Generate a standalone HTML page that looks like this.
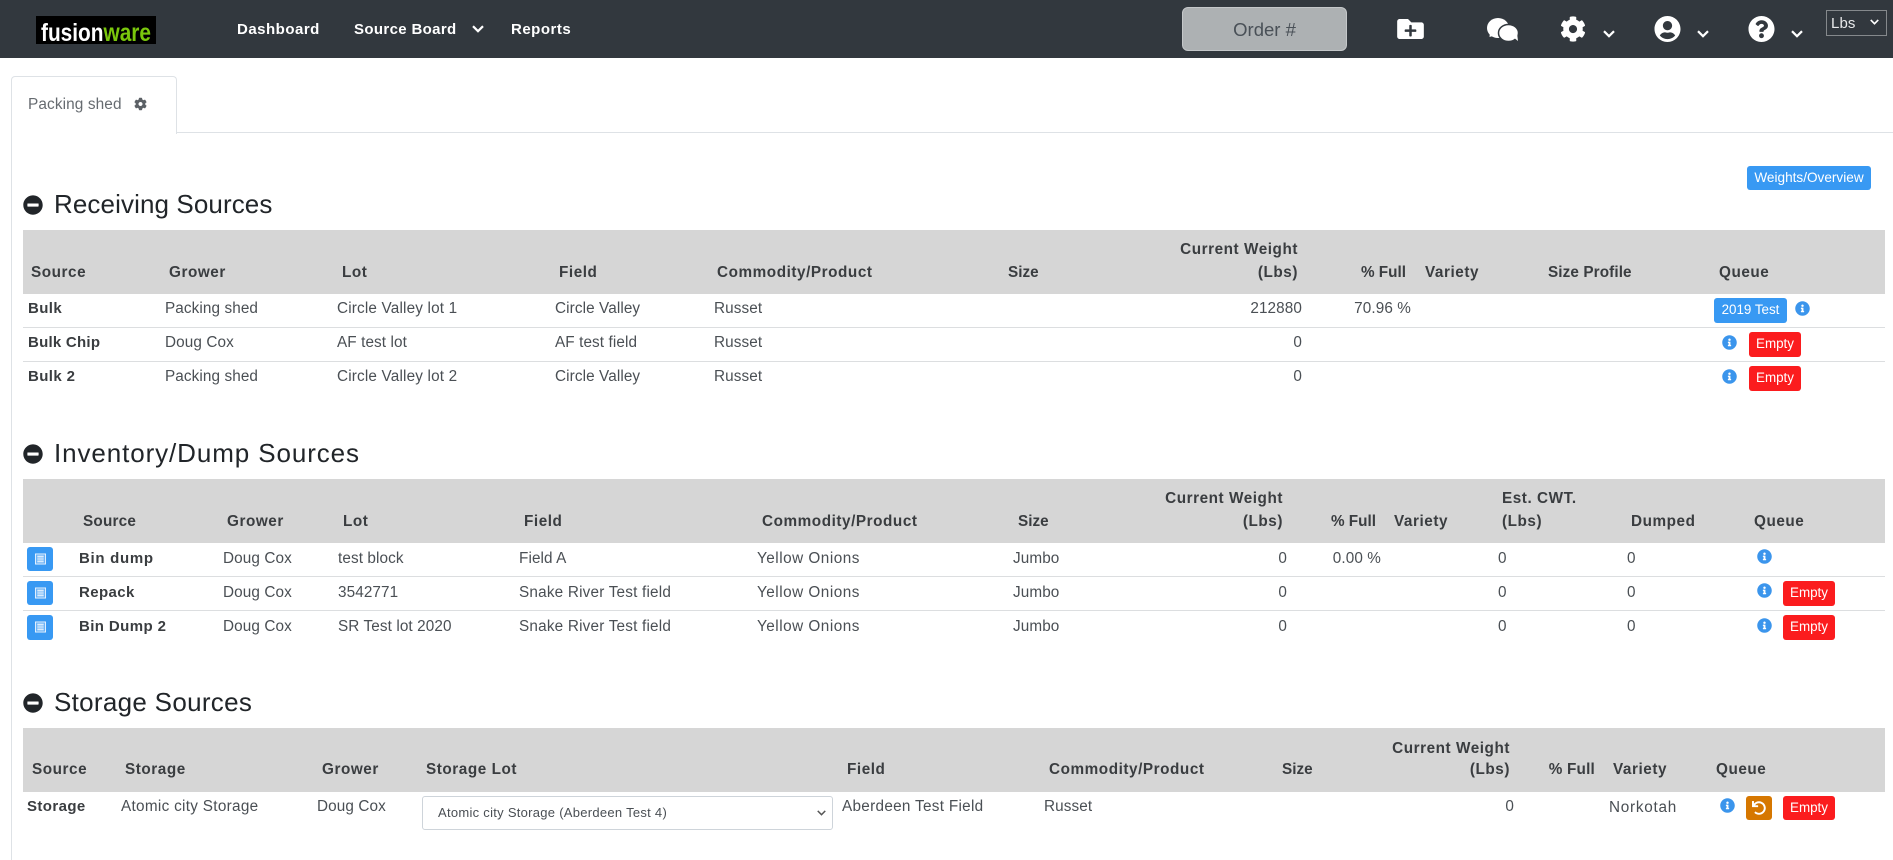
<!DOCTYPE html>
<html><head><meta charset="utf-8"><title>Source Board</title>
<style>
html,body{margin:0;padding:0;background:#fff}
body{position:relative;width:1893px;height:860px;overflow:hidden;font-family:"Liberation Sans",sans-serif;color:#495057}
.t,.h,.b,.n,.x{position:absolute;white-space:nowrap;line-height:20px}
.t,.h,.b{margin-top:1px}
.t{font-size:15.3px;letter-spacing:.1px;color:#4a4f54}
.h{font-size:15.3px;font-weight:700;letter-spacing:.55px;color:#3a3d40}
.b{font-size:15px;font-weight:700;letter-spacing:.4px;color:#3a3d40}
.n{font-size:15px;font-weight:700;letter-spacing:.5px;color:#fff;top:20px}
.x{font-size:26px;line-height:36px;color:#212529}
.bar{position:absolute;left:23px;width:1862px;background:#d6d6d6}
.ln{position:absolute;left:23px;width:1862px;height:1px;background:#dcdee0}
.btn{position:absolute;border-radius:3px;color:#fff;font-size:13.4px;text-align:center;line-height:24px;height:25px}
.e{background:#fb1c1e;width:52px}
.bl{background:#3899f3}
svg{position:absolute;display:block}
.i{width:15px;height:15px;fill:#3b95ec}
.c{width:20px;height:20px;left:23px;fill:#212529}
</style></head><body>

<svg width="0" height="0" style="position:absolute"><defs>
<symbol id="info" viewBox="0 0 512 512"><path d="M256 8C119.043 8 8 119.083 8 256c0 136.997 111.043 248 248 248s248-111.003 248-248C504 119.083 392.957 8 256 8zm0 110c23.196 0 42 18.804 42 42s-18.804 42-42 42-42-18.804-42-42 18.804-42 42-42zm56 254c0 6.627-5.373 12-12 12h-88c-6.627 0-12-5.373-12-12v-24c0-6.627 5.373-12 12-12h12v-64h-12c-6.627 0-12-5.373-12-12v-24c0-6.627 5.373-12 12-12h64c6.627 0 12 5.373 12 12v100h12c6.627 0 12 5.373 12 12v24z"/></symbol>
<symbol id="minus" viewBox="0 0 512 512"><path d="M256 8C119 8 8 119 8 256s111 248 248 248 248-111 248-248S393 8 256 8zM124 296c-6.600 0-12-5.400-12-12v-56c0-6.600 5.400-12 12-12h264c6.600 0 12 5.400 12 12v56c0 6.600-5.400 12-12 12H124z"/></symbol>
<symbol id="cog" viewBox="0 0 512 512"><path d="M487.400 315.700l-42.600-24.600c4.300-23.200 4.300-47 0-70.200l42.600-24.600c4.900-2.800 7.100-8.600 5.500-14-11.100-35.600-30-67.800-54.700-94.600-3.800-4.100-10-5.100-14.800-2.300L380.800 110c-17.900-15.400-38.500-27.300-60.800-35.100V25.800c0-5.600-3.900-10.500-9.400-11.700-36.700-8.200-74.300-7.800-109.200 0-5.500 1.200-9.400 6.100-9.400 11.700V75c-22.200 7.900-42.800 19.800-60.800 35.100L88.700 85.500c-4.900-2.800-11-1.900-14.800 2.300-24.700 26.700-43.600 58.900-54.700 94.600-1.700 5.400.6 11.200 5.500 14L67.300 221c-4.300 23.200-4.300 47 0 70.200l-42.600 24.600c-4.900 2.800-7.100 8.600-5.500 14 11.100 35.600 30 67.800 54.700 94.600 3.800 4.100 10 5.100 14.800 2.300l42.600-24.600c17.900 15.400 38.500 27.300 60.800 35.100v49.200c0 5.600 3.900 10.500 9.400 11.700 36.700 8.200 74.300 7.800 109.200 0 5.500-1.200 9.400-6.100 9.400-11.700v-49.200c22.200-7.900 42.800-19.800 60.800-35.100l42.600 24.600c4.900 2.800 11 1.900 14.800-2.300 24.700-26.700 43.600-58.900 54.700-94.600 1.500-5.500-.7-11.300-5.600-14.100zM256 336c-44.100 0-80-35.900-80-80s35.900-80 80-80 80 35.900 80 80-35.900 80-80 80z"/></symbol>
<symbol id="doc" viewBox="0 0 12 12"><rect x=".5" y=".5" width="11" height="11" fill="#cfe6fc" fill-opacity=".35" stroke="#eaf4fe" stroke-width="1"/><path d="M2.500 3h7M2.500 5h7M2.500 7h7M2.500 9h7" stroke="#fff" stroke-width="1"/></symbol>
<symbol id="chev" viewBox="0 0 12 8"><path d="M1 1.200l5 5 5-5" fill="none" stroke="#fff" stroke-width="2.200"/></symbol>
</defs></svg>

<!-- top bar -->
<div style="position:absolute;left:0;top:0;width:1893px;height:58px;background:#32383e"></div>
<div style="position:absolute;left:36px;top:16px;width:120px;height:28px;background:#000"></div>
<svg style="left:36px;top:16px" width="120" height="28"><text x="5" y="25" font-family="Liberation Sans" font-weight="700" font-size="25" fill="#fff" textLength="110" lengthAdjust="spacingAndGlyphs">fusion<tspan fill="#7ac70c">ware</tspan></text></svg>
<div class="n" style="left:237px">Dashboard</div>
<div class="n" style="left:354px;letter-spacing:.35px">Source Board</div>
<svg style="left:472px;top:25px" width="12" height="8"><use href="#chev"/></svg>
<div class="n" style="left:511px">Reports</div>

<div style="position:absolute;left:1182px;top:7px;width:163px;height:42px;background:#adb1b3;border:1px solid #c4c7c9;border-radius:6px;text-align:center;line-height:43px;font-size:18.5px;color:#495057">Order #</div>

<svg style="left:1397px;top:19px" width="27" height="20" viewBox="0 64 512 384" fill="#fff"><path d="M464 128H272l-64-64H48C21.490 64 0 85.490 0 112v288c0 26.510 21.490 48 48 48h416c26.510 0 48-21.490 48-48V176c0-26.510-21.490-48-48-48zm-96 168c0 8.840-7.160 16-16 16h-72v72c0 8.840-7.160 16-16 16h-16c-8.840 0-16-7.160-16-16v-72h-72c-8.840 0-16-7.160-16-16v-16c0-8.840 7.160-16 16-16h72v-72c0-8.840 7.160-16 16-16h16c8.840 0 16 7.160 16 16v72h72c8.840 0 16 7.160 16 16v16z"/></svg>
<svg style="left:1487px;top:17px" width="32" height="25" viewBox="0 0 32 25" fill="#fff"><ellipse cx="11" cy="11" rx="11" ry="10"/><path d="M3 15L2.500 20 9 18z"/><ellipse cx="21.500" cy="16" rx="10" ry="8.500" stroke="#32383e" stroke-width="1.500"/><path d="M26 20l5 4-1-8z"/></svg>
<svg style="left:1560px;top:16px;fill:#fff" width="26" height="26"><use href="#cog"/></svg>
<svg style="left:1603px;top:30px" width="12" height="8"><use href="#chev"/></svg>
<svg style="left:1654px;top:16px" width="27" height="26" viewBox="0 8 496 496" fill="#fff"><path d="M248 8C111 8 0 119 0 256s111 248 248 248 248-111 248-248S385 8 248 8zm0 96c48.600 0 88 39.400 88 88s-39.400 88-88 88-88-39.400-88-88 39.400-88 88-88zm0 344c-58.700 0-111.300-26.600-146.500-68.200 18.800-35.400 55.600-59.800 98.500-59.800 2.400 0 4.800.4 7.100 1.100 13 4.200 26.600 6.900 40.900 6.900 14.300 0 28-2.700 40.900-6.900 2.300-.7 4.700-1.100 7.100-1.100 42.900 0 79.700 24.400 98.500 59.800C359.300 421.400 306.700 448 248 448z"/></svg>
<svg style="left:1697px;top:30px" width="12" height="8"><use href="#chev"/></svg>
<svg style="left:1748px;top:16px" width="27" height="26" viewBox="8 8 496 496" fill="#fff"><path d="M504 256c0 136.997-111.043 248-248 248S8 392.997 8 256C8 119.083 119.043 8 256 8s248 111.083 248 248zM262.655 90c-54.497 0-89.255 22.957-116.549 63.758-3.536 5.286-2.353 12.415 2.715 16.258l34.699 26.310c5.205 3.947 12.621 3.008 16.665-2.122 17.864-22.658 30.113-35.797 57.303-35.797 20.429 0 45.698 13.148 45.698 32.958 0 14.976-12.363 22.667-32.534 33.976C247.128 238.528 216 254.941 216 296v4c0 6.627 5.373 12 12 12h56c6.627 0 12-5.373 12-12v-1.333c0-28.462 83.186-29.647 83.186-106.667 0-58.002-60.165-102-116.531-102zM256 338c-25.365 0-46 20.635-46 46 0 25.364 20.635 46 46 46s46-20.636 46-46c0-25.365-20.635-46-46-46z"/></svg>
<svg style="left:1791px;top:30px" width="12" height="8"><use href="#chev"/></svg>
<div style="position:absolute;left:1826px;top:10px;width:59px;height:24px;border:1px solid #85898c"></div>
<div class="t" style="left:1831px;top:13px;color:#e8e9ea;font-size:15px">Lbs</div>
<svg style="left:1870px;top:19px" width="9" height="6" viewBox="0 0 12 8"><use href="#chev"/></svg>

<!-- tab -->
<div style="position:absolute;left:176px;top:132px;width:1717px;height:1px;background:#dee2e6"></div>
<div style="position:absolute;left:11px;top:76px;width:164px;height:57px;border:1px solid #dee2e6;border-bottom:0;border-radius:4px 4px 0 0;box-sizing:content-box;background:#fff"></div>
<div style="position:absolute;left:11px;top:133px;width:1px;height:727px;background:#dee2e6"></div>
<div class="t" style="left:28px;top:94px;color:#666b70;font-size:15.4px">Packing shed</div>
<svg style="left:134px;top:97px;fill:#5c6166" width="13" height="14"><use href="#cog"/></svg>

<div class="btn bl" style="left:1747px;top:166px;width:124px;height:24px;line-height:23px;font-size:13.6px">Weights/Overview</div>

<!-- Receiving -->
<svg class="c" style="top:195px"><use href="#minus"/></svg>
<div class="x" style="left:54px;top:186px;letter-spacing:.1px">Receiving Sources</div>
<div class="bar" style="top:230px;height:64px"></div>
<div class="h" style="left:31px;top:262px">Source</div>
<div class="h" style="left:169px;top:262px">Grower</div>
<div class="h" style="left:342px;top:262px">Lot</div>
<div class="h" style="left:559px;top:262px">Field</div>
<div class="h" style="left:717px;top:262px">Commodity/Product</div>
<div class="h" style="left:1008px;top:262px;letter-spacing:0">Size</div>
<div class="h" style="right:595px;top:239px">Current Weight</div>
<div class="h" style="right:595px;top:262px">(Lbs)</div>
<div class="h" style="right:487px;top:262px;letter-spacing:0">% Full</div>
<div class="h" style="left:1425px;top:262px">Variety</div>
<div class="h" style="left:1548px;top:262px;letter-spacing:.1px">Size Profile</div>
<div class="h" style="left:1719px;top:262px">Queue</div>

<div class="b" style="left:28px;top:298px">Bulk</div>
<div class="t" style="left:165px;top:298px">Packing shed</div>
<div class="t" style="left:337px;top:298px;letter-spacing:.17px">Circle Valley lot 1</div>
<div class="t" style="left:555px;top:298px">Circle Valley</div>
<div class="t" style="left:714px;top:298px">Russet</div>
<div class="t" style="right:591px;top:298px">212880</div>
<div class="t" style="right:482px;top:298px">70.96 %</div>
<div class="btn bl" style="left:1714px;top:298px;width:73px">2019 Test</div>
<svg class="i" style="left:1795px;top:301px"><use href="#info"/></svg>
<div class="ln" style="top:327px"></div>

<div class="b" style="left:28px;top:332px;letter-spacing:.25px">Bulk Chip</div>
<div class="t" style="left:165px;top:332px">Doug Cox</div>
<div class="t" style="left:337px;top:332px">AF test lot</div>
<div class="t" style="left:555px;top:332px">AF test field</div>
<div class="t" style="left:714px;top:332px">Russet</div>
<div class="t" style="right:591px;top:332px">0</div>
<svg class="i" style="left:1722px;top:335px"><use href="#info"/></svg>
<div class="btn e" style="left:1749px;top:332px">Empty</div>
<div class="ln" style="top:361px"></div>

<div class="b" style="left:28px;top:366px">Bulk 2</div>
<div class="t" style="left:165px;top:366px">Packing shed</div>
<div class="t" style="left:337px;top:366px;letter-spacing:.17px">Circle Valley lot 2</div>
<div class="t" style="left:555px;top:366px">Circle Valley</div>
<div class="t" style="left:714px;top:366px">Russet</div>
<div class="t" style="right:591px;top:366px">0</div>
<svg class="i" style="left:1722px;top:369px"><use href="#info"/></svg>
<div class="btn e" style="left:1749px;top:366px">Empty</div>

<!-- Inventory -->
<svg class="c" style="top:444px"><use href="#minus"/></svg>
<div class="x" style="left:54px;top:435px;letter-spacing:.9px">Inventory/Dump Sources</div>
<div class="bar" style="top:479px;height:64px"></div>
<div class="h" style="left:83px;top:511px;letter-spacing:.2px">Source</div>
<div class="h" style="left:227px;top:511px">Grower</div>
<div class="h" style="left:343px;top:511px">Lot</div>
<div class="h" style="left:524px;top:511px">Field</div>
<div class="h" style="left:762px;top:511px">Commodity/Product</div>
<div class="h" style="left:1018px;top:511px;letter-spacing:0">Size</div>
<div class="h" style="right:610px;top:488px">Current Weight</div>
<div class="h" style="right:610px;top:511px">(Lbs)</div>
<div class="h" style="right:517px;top:511px;letter-spacing:0">% Full</div>
<div class="h" style="left:1394px;top:511px">Variety</div>
<div class="h" style="left:1502px;top:488px">Est. CWT.</div>
<div class="h" style="left:1502px;top:511px">(Lbs)</div>
<div class="h" style="left:1631px;top:511px">Dumped</div>
<div class="h" style="left:1754px;top:511px">Queue</div>

<div class="btn bl" style="left:27px;top:547px;width:26px;height:24px"></div>
<svg style="left:35px;top:553px" width="11" height="12"><use href="#doc"/></svg>
<div class="b" style="left:79px;top:548px;letter-spacing:.7px">Bin dump</div>
<div class="t" style="left:223px;top:548px">Doug Cox</div>
<div class="t" style="left:338px;top:548px">test block</div>
<div class="t" style="left:519px;top:548px">Field A</div>
<div class="t" style="left:757px;top:548px;letter-spacing:.5px">Yellow Onions</div>
<div class="t" style="left:1013px;top:548px">Jumbo</div>
<div class="t" style="right:606px;top:548px">0</div>
<div class="t" style="right:512px;top:548px">0.00 %</div>
<div class="t" style="left:1498px;top:548px">0</div>
<div class="t" style="left:1627px;top:548px">0</div>
<svg class="i" style="left:1757px;top:549px"><use href="#info"/></svg>
<div class="ln" style="top:576px"></div>

<div class="btn bl" style="left:27px;top:581px;width:26px;height:24px"></div>
<svg style="left:35px;top:587px" width="11" height="12"><use href="#doc"/></svg>
<div class="b" style="left:79px;top:582px">Repack</div>
<div class="t" style="left:223px;top:582px">Doug Cox</div>
<div class="t" style="left:338px;top:582px">3542771</div>
<div class="t" style="left:519px;top:582px;letter-spacing:.2px">Snake River Test field</div>
<div class="t" style="left:757px;top:582px;letter-spacing:.5px">Yellow Onions</div>
<div class="t" style="left:1013px;top:582px">Jumbo</div>
<div class="t" style="right:606px;top:582px">0</div>
<div class="t" style="left:1498px;top:582px">0</div>
<div class="t" style="left:1627px;top:582px">0</div>
<svg class="i" style="left:1757px;top:583px"><use href="#info"/></svg>
<div class="btn e" style="left:1783px;top:581px">Empty</div>
<div class="ln" style="top:610px"></div>

<div class="btn bl" style="left:27px;top:615px;width:26px;height:25px"></div>
<svg style="left:35px;top:621px" width="11" height="12"><use href="#doc"/></svg>
<div class="b" style="left:79px;top:616px">Bin Dump 2</div>
<div class="t" style="left:223px;top:616px">Doug Cox</div>
<div class="t" style="left:338px;top:616px">SR Test lot 2020</div>
<div class="t" style="left:519px;top:616px;letter-spacing:.2px">Snake River Test field</div>
<div class="t" style="left:757px;top:616px;letter-spacing:.5px">Yellow Onions</div>
<div class="t" style="left:1013px;top:616px">Jumbo</div>
<div class="t" style="right:606px;top:616px">0</div>
<div class="t" style="left:1498px;top:616px">0</div>
<div class="t" style="left:1627px;top:616px">0</div>
<svg class="i" style="left:1757px;top:618px"><use href="#info"/></svg>
<div class="btn e" style="left:1783px;top:615px">Empty</div>

<!-- Storage -->
<svg class="c" style="top:693px"><use href="#minus"/></svg>
<div class="x" style="left:54px;top:684px;letter-spacing:.3px">Storage Sources</div>
<div class="bar" style="top:728px;height:64px"></div>
<div class="h" style="left:32px;top:759px">Source</div>
<div class="h" style="left:125px;top:759px">Storage</div>
<div class="h" style="left:322px;top:759px">Grower</div>
<div class="h" style="left:426px;top:759px">Storage Lot</div>
<div class="h" style="left:847px;top:759px">Field</div>
<div class="h" style="left:1049px;top:759px">Commodity/Product</div>
<div class="h" style="left:1282px;top:759px;letter-spacing:0">Size</div>
<div class="h" style="right:383px;top:738px">Current Weight</div>
<div class="h" style="right:383px;top:759px">(Lbs)</div>
<div class="h" style="right:298px;top:759px;letter-spacing:.2px">% Full</div>
<div class="h" style="left:1613px;top:759px">Variety</div>
<div class="h" style="left:1716px;top:759px">Queue</div>

<div class="b" style="left:27px;top:796px">Storage</div>
<div class="t" style="left:121px;top:796px;letter-spacing:.3px">Atomic city Storage</div>
<div class="t" style="left:317px;top:796px">Doug Cox</div>
<div style="position:absolute;left:422px;top:796px;width:409px;height:32px;border:1px solid #ced4da;border-radius:3px;background:#fff"></div>
<div class="t" style="left:438px;top:802px;font-size:13px;letter-spacing:.28px">Atomic city Storage (Aberdeen Test 4)</div>
<svg style="left:817px;top:810px" width="9" height="6" viewBox="0 0 12 8"><path d="M1 1.200l5 5 5-5" fill="none" stroke="#555" stroke-width="2"/></svg>
<div class="t" style="left:842px;top:796px;letter-spacing:.3px">Aberdeen Test Field</div>
<div class="t" style="left:1044px;top:796px">Russet</div>
<div class="t" style="right:379px;top:796px">0</div>
<div class="t" style="left:1609px;top:797px;letter-spacing:.75px">Norkotah</div>
<svg class="i" style="left:1720px;top:798px"><use href="#info"/></svg>
<div class="btn" style="left:1746px;top:796px;width:26px;height:24px;background:#d67700"></div>
<svg style="left:1752px;top:801px" width="14" height="14" viewBox="0 0 512 512" fill="#fff"><path d="M212.333 224.333H12c-6.627 0-12-5.373-12-12V12C0 5.373 5.373 0 12 0h48c6.627 0 12 5.373 12 12v78.112C117.773 39.279 184.260 7 258.175 8 395.081 9.855 504.240 121.360 503.997 258.280 503.755 394.811 392.997 505 256 505c-64.146 0-122.609-24.159-166.740-63.868-5.097-4.586-5.340-12.512-.492-17.360l33.970-33.970c4.473-4.473 11.634-4.716 16.400-.557C170.263 416.715 211.170 433 256 433c97.260 0 176-78.724 176-176 0-97.260-78.724-176-176-176-58.491 0-110.280 28.480-142.274 72.333h98.607c6.627 0 12 5.373 12 12v48c0 6.627-5.373 12-12 12z"/></svg>
<div class="btn e" style="left:1783px;top:796px;height:24px;line-height:23px">Empty</div>

</body></html>
